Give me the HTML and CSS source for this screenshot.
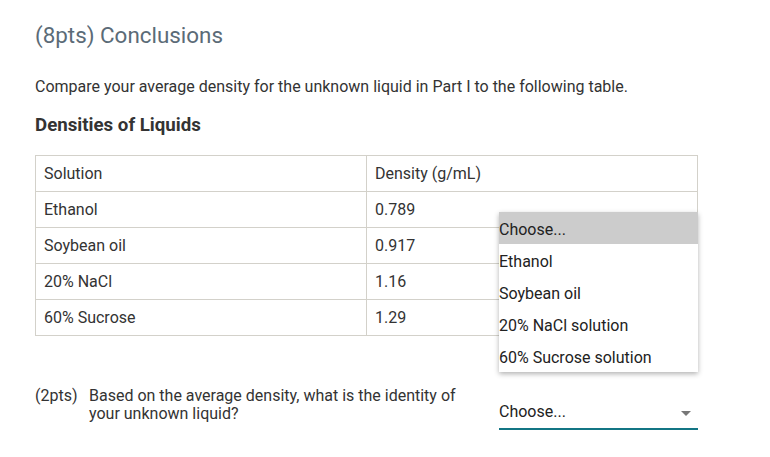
FILE: index.html
```html
<!DOCTYPE html>
<html>
<head>
    <title>Conclusions</title>
    <link rel="stylesheet" href="styles.css">
</head>
<body>
    <div class="section">
        <h2 class="section-title">(8pts) Conclusions</h2>
        <p class="intro">Compare your average density for the unknown liquid in Part I to the following table.</p>
        <h3 class="table-title">Densities of Liquids</h3>

        <table class="density-table">
            <tr><td>Solution</td><td>Density (g/mL)</td></tr>
            <tr><td>Ethanol</td><td>0.789</td></tr>
            <tr><td>Soybean oil</td><td>0.917</td></tr>
            <tr><td>20% NaCl</td><td>1.16</td></tr>
            <tr><td>60% Sucrose</td><td>1.29</td></tr>
        </table>

        <div class="question">
            <div class="question-text">
                <span class="points">(2pts)</span>
                <span class="prompt">Based on the average density, what is the identity of your unknown liquid?</span>
            </div>
            <div class="select-box">
                <span class="select-value">Choose...</span>
                <span class="select-arrow"></span>
            </div>
        </div>

        <ul class="option-list">
            <li class="selected">Choose...</li>
            <li>Ethanol</li>
            <li>Soybean oil</li>
            <li>20% NaCl solution</li>
            <li>60% Sucrose solution</li>
        </ul>
    </div>
</body>
</html>
```
FILE: styles.css
```css
body {
    margin: 0;
    font-family: Roboto, "Noto Sans", sans-serif;
    color: #333;
    background: #fff;
}

.section {
    position: relative;
    width: 663px;
    padding: 22px 35px 0;
}

.section-title {
    margin: 0;
    font-size: 22.4px;
    font-weight: 400;
    line-height: 26px;
    color: #5b6b77;
}

.intro {
    margin: 29px 0 0;
    font-size: 16px;
    line-height: 20px;
}

.table-title {
    margin: 17px 0 0;
    font-size: 18.7px;
    font-weight: 700;
    line-height: 22px;
    color: #333;
}

.density-table {
    margin-top: 19px;
    width: 100%;
    border-collapse: collapse;
    font-size: 16px;
}

.density-table td {
    width: 50%;
    height: 35px;
    padding: 0 8px;
    border: 1px solid #d3d1ca;
}

.question {
    display: flex;
    justify-content: space-between;
    align-items: flex-start;
    margin-top: 51px;
}

.question-text {
    display: flex;
    width: 430px;
    font-size: 16px;
    line-height: 18px;
}

.points {
    flex: none;
    width: 54px;
}

.select-box {
    display: flex;
    align-items: center;
    justify-content: space-between;
    width: 199px;
    height: 34px;
    margin-top: 7px;
    border-bottom: 2px solid #137584;
    font-size: 16px;
    color: #222;
}

.select-arrow {
    width: 0;
    height: 0;
    margin-right: 7px;
    margin-top: 4px;
    border-left: 5px solid transparent;
    border-right: 5px solid transparent;
    border-top: 5px solid #777;
}

.option-list {
    position: absolute;
    left: 499px;
    top: 212px;
    width: 199px;
    margin: 0;
    padding: 0;
    list-style: none;
    background: #fff;
    box-shadow: 0 2px 5px rgba(0, 0, 0, 0.3);
    font-size: 16px;
    color: #222;
}

.option-list li {
    height: 30px;
    padding-top: 2px;
    line-height: 32px;
}

.option-list .selected {
    background: #cccccc;
}
```
